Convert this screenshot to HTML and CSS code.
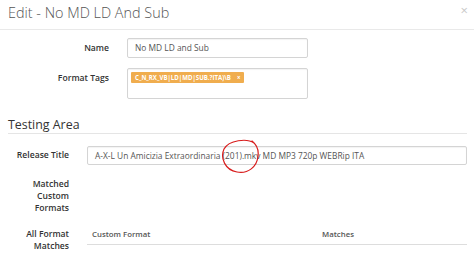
FILE: index.html
```html
<!DOCTYPE html>
<html>
<head>
<meta charset="utf-8">
<link rel="stylesheet" href="styles.css">
</head>
<body>
<div class="modal">
  <div class="header">
    <h1 class="title">Edit - No MD LD And Sub</h1>
    <span class="close">×</span>
  </div>
  <div class="form">
    <div class="group center">
      <div class="label wide">Name</div>
      <div class="input short">No MD LD and Sub</div>
    </div>
    <div class="group">
      <div class="label wide">Format Tags</div>
      <div class="input short tags"><span class="tag">C_N_RX_VB|LD|MD|SUB.?ITA)\B<span class="x">×</span></span></div>
    </div>
  </div>
  <div class="legend">Testing Area</div>
  <div class="testing">
    <div class="group center">
      <div class="label narrow">Release Title</div>
      <div class="input long">
        <span>A-X-L Un Amicizia Extraordinaria (201).mkv MD MP3 720p WEBRip ITA</span>
        <svg class="mark" width="40" height="36" viewBox="0 0 40 36">
          <path d="M33 4 C26 -1 8 1 3 10 C-1 19 4 31 16 33 C27 35 36 28 37 17 C38 10 36 6 31 2" fill="none" stroke="#d81c1c" stroke-width="1.2" stroke-linecap="round"/>
        </svg>
      </div>
    </div>
    <div class="group">
      <div class="label narrow multi">Matched<br>Custom<br>Formats</div>
    </div>
    <div class="group last">
      <div class="label narrow multi">All Format<br>Matches</div>
      <div class="table">
        <div class="th col1">Custom Format</div>
        <div class="th col2">Matches</div>
      </div>
    </div>
  </div>
</div>
</body>
</html>
```

FILE: styles.css
```css
html, body {
  margin: 0;
  padding: 0;
  background: #fff;
}
body {
  font-family: "Open Sans", "Noto Sans", sans-serif;
  color: #333;
  width: 474px;
  height: 262px;
  overflow: hidden;
}
.header {
  display: flex;
  align-items: center;
  justify-content: space-between;
  height: 29px;
  border-bottom: 1px solid #e9e9e9;
  padding: 0 6px 0 8px;
}
.title {
  margin: 0;
  font-size: 14.4px;
  font-weight: 300;
  color: #555;
  line-height: 20px;
  margin-top: -4px;
}
.close {
  font-size: 13px;
  color: #c8c8c8;
  line-height: 14px;
  margin-top: -10px;
}
.form {
  display: flex;
  flex-direction: column;
  gap: 10px;
  padding-top: 8px;
}
.group {
  display: flex;
  align-items: flex-start;
  gap: 18px;
}
.group.center {
  align-items: center;
}
.group.last {
  margin-top: 1px;
}
.label {
  font-size: 8.6px;
  font-weight: 600;
  color: #333;
  text-align: right;
  line-height: 20px;
  flex: none;
}
.label.wide { width: 109px; }
.label.narrow { width: 69px; }
.label.multi {
  line-height: 12px;
}
.input {
  box-sizing: border-box;
  border: 1px solid #d4d4d4;
  border-radius: 2px;
  height: 20px;
  padding: 0 7px;
  font-size: 8.4px;
  color: #555;
  line-height: 18px;
  box-shadow: inset 0 1px 1px rgba(0,0,0,0.05);
}
.input.short { width: 181px; }
.input.long {
  width: 380px;
  height: 19px;
  line-height: 17px;
  position: relative;
  white-space: nowrap;
}
.tags {
  height: 31px;
  padding: 3px;
  line-height: 11px;
}
.tag {
  display: inline-block;
  background: #f0ad4e;
  color: #fff;
  font-size: 6.1px;
  font-weight: 700;
  height: 11px;
  line-height: 11px;
  padding: 0 4px;
  border-radius: 1px;
  vertical-align: top;
}
.tag .x {
  margin-left: 6px;
}
.legend {
  margin: 17px 7px 0 8px;
  font-size: 12.4px;
  color: #333;
  line-height: 17px;
  border-bottom: 1px solid #e5e5e5;
  padding-bottom: 0;
}
.testing {
  display: flex;
  flex-direction: column;
  padding-top: 11px;
  gap: 13px;
}
.mark {
  position: absolute;
  left: 133px;
  top: -8px;
}
.table {
  display: flex;
  width: 380px;
  border-bottom: 1px solid #ddd;
  height: 16px;
  margin-top: 0;
}
.th {
  font-size: 7.8px;
  font-weight: 600;
  color: #555;
  line-height: 12px;
}
.col1 {
  width: 122px;
  padding-left: 5px;
  box-sizing: border-box;
}
.col2 {
  flex: 1;
  text-align: center;
}
```
